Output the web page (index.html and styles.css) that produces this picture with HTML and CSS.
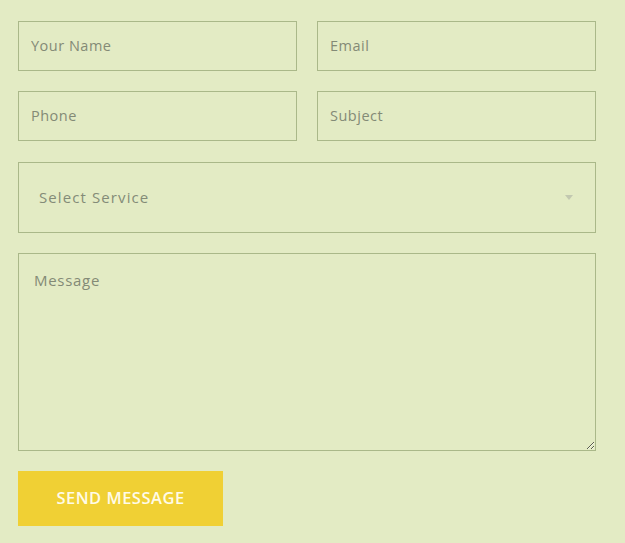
FILE: index.html
```html
<!DOCTYPE html>
<html>
<head>
<meta charset="utf-8">
<link rel="stylesheet" href="styles.css">
</head>
<body>
<form class="form">
  <div class="row">
    <input class="field" type="text" placeholder="Your Name">
    <input class="field" type="email" placeholder="Email">
  </div>
  <div class="row">
    <input class="field" type="text" placeholder="Phone">
    <input class="field" type="text" placeholder="Subject">
  </div>
  <div class="select-wrap">
    <select class="select">
      <option>Select Service</option>
    </select>
  </div>
  <textarea class="message" placeholder="Message"></textarea>
  <div><button type="button" class="btn">SEND MESSAGE</button></div>
</form>
</body>
</html>
```
FILE: styles.css
```css
html, body {
  margin: 0;
  background: #e3ebc4;
}
body {
  padding: 21px 29px 0 18px;
  font-family: "Open Sans", "DejaVu Sans", sans-serif;
}
.form {
  width: 578px;
  display: flex;
  flex-direction: column;
  gap: 20px;
}
.row {
  display: grid;
  grid-template-columns: 1fr 1fr;
  gap: 20px;
}
.field, .select, .message {
  box-sizing: border-box;
  background: transparent;
  border: 1px solid #aab889;
  border-radius: 0;
  font-family: "Open Sans", "DejaVu Sans", sans-serif;
  font-size: 14.5px;
  letter-spacing: 0.5px;
  color: #7f8771;
  outline: none;
  margin: 0;
}
.field {
  height: 50px;
  padding: 0 12px 2px;
  width: 100%;
}
::placeholder {
  color: #838a76;
  opacity: 1;
}
.select-wrap {
  position: relative;
  margin-top: 1px;
}
.select {
  appearance: none;
  -webkit-appearance: none;
  width: 100%;
  height: 71px;
  padding: 0 20px 2px;
  font-size: 15px;
  letter-spacing: 1.1px;
  color: #848b78;
}
.select-wrap::after {
  content: "";
  position: absolute;
  right: 23px;
  top: 33px;
  border-left: 4px solid transparent;
  border-right: 4px solid transparent;
  border-top: 5px solid #c2c8b0;
}
.message {
  width: 100%;
  height: 198px;
  padding: 16px 15px;
  font-size: 15px;
  letter-spacing: 0.7px;
  resize: vertical;
  display: block;
}
.btn {
  width: 205px;
  height: 55px;
  background: #f0d034;
  border: none;
  color: #fffbe8;
  font-family: "Open Sans", "DejaVu Sans", sans-serif;
  font-weight: 600;
  font-size: 16.5px;
  letter-spacing: 0.5px;
  padding: 0 0 3px;
  cursor: pointer;
}
```
